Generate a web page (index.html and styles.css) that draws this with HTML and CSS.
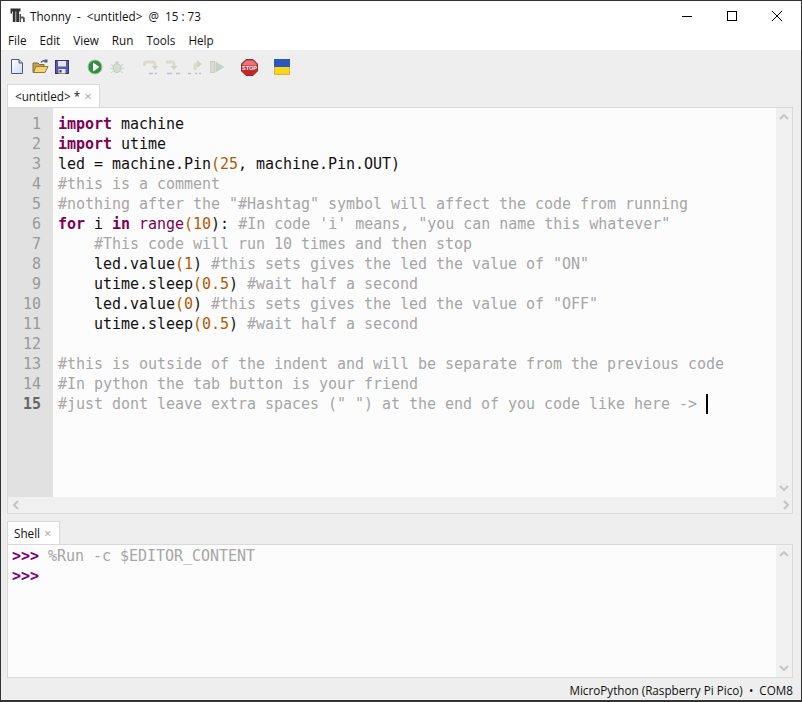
FILE: index.html
```html
<!DOCTYPE html>
<html lang="en">
<head>
    <meta charset="UTF-8">
    <meta name="viewport" content="width=device-width, initial-scale=1.0">
    <title>Thonny</title>
    <link rel="stylesheet" href="styles.css">
</head>
<body>
    <div class="window">
        <header class="titlebar">
            <svg class="app-icon" width="15" height="15" viewBox="0 0 15 15">
                <path d="M0.500 0.500H10.500V3.500H9V14H6.200V3.500H5.500V14H2.800V3.500H2V5.500H0.500Z" fill="#333"/>
                <path d="M9.500 6H11V8.500H13C14 8.500 14.800 9.300 14.800 10.500V14H13V10.500H11V14H9.500Z" fill="#555"/>
            </svg>
            <span class="title-text">Thonny  -  &lt;untitled&gt;  @  15 : 73</span>
            <div class="window-buttons">
                <svg width="12" height="12" viewBox="0 0 12 12"><path d="M1 6.500H11" stroke="#000"/></svg>
                <svg width="12" height="12" viewBox="0 0 12 12"><rect x="1.500" y="1.500" width="9" height="9" fill="none" stroke="#000"/></svg>
                <svg width="12" height="12" viewBox="0 0 12 12"><path d="M1 1L11 11M11 1L1 11" stroke="#000"/></svg>
            </div>
        </header>

        <nav class="menubar">
            <span>File</span><span>Edit</span><span>View</span><span>Run</span><span>Tools</span><span>Help</span>
        </nav>

        <section class="toolbar">
            <svg class="tool" width="16" height="16" viewBox="0 0 16 16">
                <defs>
                    <linearGradient id="page" x1="0" y1="0" x2="1" y2="1">
                        <stop offset="0" stop-color="#ffffff"/>
                        <stop offset="1" stop-color="#cdd8f0"/>
                    </linearGradient>
                </defs>
                <path d="M2.500 0.500H10L13.500 4V14.500H2.500Z" fill="url(#page)" stroke="#4f5a70"/>
                <path d="M10 0.500V4H13.500" fill="#b9c6e0" stroke="#4f5a70"/>
            </svg>
            <svg class="tool tool-open" width="17" height="16" viewBox="0 0 17 16">
                <path d="M1 4H6L7.500 5.500H12V13.500H1Z" fill="#c9a24a" stroke="#7d6a3c"/>
                <path d="M1.500 13.500L4 7.500H16L13 13.500Z" fill="#f6d36f" stroke="#8f7a45"/>
                <path d="M9 3.500C10 1.500 12 1.500 13.500 2.500" fill="none" stroke="#4a5f85" stroke-width="1.500"/>
                <path d="M12.500 0.500H15.500V3.500H12.500Z" fill="#4a5f85"/>
            </svg>
            <svg class="tool tool-save" width="16" height="16" viewBox="0 0 16 16">
                <rect x="1.500" y="1.500" width="13" height="13" fill="#5a55b0" stroke="#37346f"/>
                <rect x="4" y="2" width="8" height="5.500" fill="#e4e4f2"/>
                <rect x="4.500" y="10" width="7" height="4.500" fill="#e8e8e8"/>
                <rect x="5.500" y="11" width="2" height="2.500" fill="#333"/>
            </svg>
            <svg class="tool tool-run" width="16" height="16" viewBox="0 0 16 16">
                <circle cx="8" cy="8" r="7" fill="#2f8f3f" stroke="#9cc7a2"/>
                <path d="M6 3.500L12.500 8L6 12.500Z" fill="#fff"/>
            </svg>
            <svg class="tool tool-debug" width="16" height="16" viewBox="0 0 16 16">
                <ellipse cx="8" cy="9" rx="4" ry="4.500" fill="#d5ddd5" stroke="#c3c8bf"/>
                <circle cx="8" cy="4" r="2" fill="#cfd3c9"/>
                <path d="M1.500 5L4.500 7M14.500 5L11.500 7M1 9.500H4M15 9.500H12M2 14L4.500 12M14 14L11.500 12" stroke="#cfd3c9"/>
            </svg>
            <svg class="tool tool-step" width="16" height="16" viewBox="0 0 16 16">
                <path d="M1.500 7V4.500C1.500 3.500 2.500 3 3.500 3H9.500C11.500 3 12 4.500 12 7" fill="none" stroke="#dcdad0" stroke-width="3"/>
                <path d="M8.500 7H15.500L12 11Z" fill="#d3d2c6"/>
                <path d="M6 14.500H10M12 14.500H14" stroke="#b9bfc9" stroke-width="1.500"/>
            </svg>
            <svg class="tool" width="16" height="16" viewBox="0 0 16 16">
                <path d="M1 3H7C8.500 3 9 4.500 9 7" fill="none" stroke="#dcdad0" stroke-width="3"/>
                <path d="M5.500 7H12.500L9 11Z" fill="#d3d2c6"/>
                <path d="M2 14.500H7M11 14.500H15" stroke="#b9bfc9" stroke-width="1.500"/>
            </svg>
            <svg class="tool" width="16" height="16" viewBox="0 0 16 16">
                <path d="M8 11V7C8 5.500 8.500 5 10 5" fill="none" stroke="#dcdad0" stroke-width="3"/>
                <path d="M10 1L15 5L10 9Z" fill="#d3d2c6"/>
                <path d="M1 14.500H4M8 14.500H10M12 14.500H14" stroke="#b9bfc9" stroke-width="1.500"/>
            </svg>
            <svg class="tool" width="16" height="16" viewBox="0 0 16 16">
                <rect x="1.500" y="2.500" width="4" height="11" fill="#dddbcf" stroke="#cfcdc0"/>
                <path d="M6.500 2.500L15.500 8L6.500 13.500Z" fill="#c3d1c6"/>
            </svg>
            <svg class="tool tool-stop" width="17" height="17" viewBox="0 0 17 17">
                <path d="M5 0.500H12L16.500 5V12L12 16.500H5L0.500 12V5Z" fill="#c8242b" stroke="#8f2a2a"/>
                <path d="M5.300 1.500H11.700L15.500 5.300V6.500H1.500V5.300Z" fill="#e2777a"/>
                <text class="stop-label" x="8.500" y="10.800" text-anchor="middle">STOP</text>
            </svg>
            <svg class="tool tool-flag" width="16" height="16" viewBox="0 0 16 16">
                <rect width="16" height="8" fill="#2c56b8"/>
                <rect y="8" width="16" height="8" fill="#f7d51d"/>
                <path d="M0.500 8V15.500H15.500V8" fill="none" stroke="#dcb13a"/>
            </svg>
        </section>

        <section class="notebook editor-book">
            <div class="tabs">
                <div class="tab tab-editor">&lt;untitled&gt; * <span class="tab-close">×</span></div>
            </div>
            <div class="pane editor-pane">
                <div class="pane-row">
                    <div class="gutter">
                        <div>1</div><div>2</div><div>3</div><div>4</div><div>5</div>
                        <div>6</div><div>7</div><div>8</div><div>9</div><div>10</div>
                        <div>11</div><div>12</div><div>13</div><div>14</div><div class="current">15</div>
                    </div>
                    <pre class="code"><span class="kw">import</span> machine
<span class="kw">import</span> utime
led = machine.Pin<span class="br">(</span><span class="num">25</span>, machine.Pin.OUT)
<span class="cm">#this is a comment</span>
<span class="cm">#nothing after the "#Hashtag" symbol will affect the code from running</span>
<span class="kw">for</span> i <span class="kw">in</span> <span class="bi">range</span><span class="br">(</span><span class="num">10</span>): <span class="cm">#In code 'i' means, "you can name this whatever"</span>
    <span class="cm">#This code will run 10 times and then stop</span>
    led.value<span class="br">(</span><span class="num">1</span>) <span class="cm">#this sets gives the led the value of "ON"</span>
    utime.sleep<span class="br">(</span><span class="num">0.5</span>) <span class="cm">#wait half a second</span>
    led.value<span class="br">(</span><span class="num">0</span>) <span class="cm">#this sets gives the led the value of "OFF"</span>
    utime.sleep<span class="br">(</span><span class="num">0.5</span>) <span class="cm">#wait half a second</span>

<span class="cm">#this is outside of the indent and will be separate from the previous code</span>
<span class="cm">#In python the tab button is your friend</span>
<span class="cm">#just dont leave extra spaces (" ") at the end of you code like here -&gt; </span><span class="caret"></span></pre>
                    <div class="vscroll">
                        <svg width="10" height="6" viewBox="0 0 10 6"><path d="M1 5L5 1L9 5" fill="none" stroke="#c4c4c4" stroke-width="2"/></svg>
                        <svg width="10" height="6" viewBox="0 0 10 6"><path d="M1 1L5 5L9 1" fill="none" stroke="#c4c4c4" stroke-width="2"/></svg>
                    </div>
                </div>
                <div class="hscroll">
                    <svg width="6" height="10" viewBox="0 0 6 10"><path d="M5 1L1 5L5 9" fill="none" stroke="#c4c4c4" stroke-width="2"/></svg>
                    <svg width="6" height="10" viewBox="0 0 6 10"><path d="M1 1L5 5L1 9" fill="none" stroke="#c4c4c4" stroke-width="2"/></svg>
                </div>
            </div>
        </section>

        <section class="notebook shell-book">
            <div class="tabs">
                <div class="tab tab-shell">Shell <span class="tab-close">×</span></div>
            </div>
            <div class="pane shell-pane">
                <div class="pane-row">
                    <pre class="code shell-code"><span class="prompt">&gt;&gt;&gt;</span> <span class="cm">%Run -c $EDITOR_CONTENT</span>
<span class="prompt">&gt;&gt;&gt;</span></pre>
                    <div class="vscroll">
                        <svg width="10" height="6" viewBox="0 0 10 6"><path d="M1 5L5 1L9 5" fill="none" stroke="#c4c4c4" stroke-width="2"/></svg>
                        <svg width="10" height="6" viewBox="0 0 10 6"><path d="M1 1L5 5L9 1" fill="none" stroke="#c4c4c4" stroke-width="2"/></svg>
                    </div>
                </div>
            </div>
        </section>

        <footer class="statusbar">MicroPython (Raspberry Pi Pico)  •  COM8</footer>
    </div>
</body>
</html>
```

FILE: styles.css
```css
:root {
    --chrome: #eeeeee;
    --line: #d9d9d9;
    --paper: #fcfcfc;
    --comment: #a6a6a6;
}

* {
    margin: 0;
    padding: 0;
    box-sizing: border-box;
}

body {
    width: 802px;
    height: 702px;
    overflow: hidden;
    font-family: "Open Sans", "Noto Sans", sans-serif;
    font-size: 11.7px;
    color: #111;
}

.window {
    width: 802px;
    height: 702px;
    display: flex;
    flex-direction: column;
    background-color: var(--chrome);
    border: 1px solid #333;
    border-bottom-width: 2px;
}

.titlebar {
    height: 29px;
    flex: none;
    display: flex;
    align-items: center;
    background-color: #fff;
    padding-left: 9px;
}

.title-text {
    margin-left: 5px;
    white-space: pre;
}

.window-buttons {
    margin-left: auto;
    display: flex;
    gap: 33px;
    padding-right: 18px;
}

.menubar {
    height: 20px;
    flex: none;
    display: flex;
    gap: 13px;
    align-items: center;
    background-color: #fff;
    padding-left: 7px;
}

.toolbar {
    height: 34px;
    flex: none;
    display: flex;
    align-items: center;
    padding-left: 8px;
    gap: 6px;
}

.tool { flex: none; }
.tool-open { margin-left: 1px; }
.tool-save { margin-left: -1px; }
.tool-run { margin-left: 11px; }
.tool-step { margin-left: 12px; }
.tool-stop { margin-left: 10px; }
.tool-flag { margin-left: 10px; }

.stop-label {
    font-family: "Liberation Sans", sans-serif;
    font-size: 5.500px;
    font-weight: 700;
    fill: #fff;
}

.notebook {
    display: flex;
    flex-direction: column;
    padding: 0 8px 0 6px;
}

.editor-book { height: 430px; flex: none; }
.shell-book { margin-top: 7px; height: 157px; flex: none; }

.tabs {
    height: 23px;
    flex: none;
    display: flex;
}

.tab {
    background-color: #fff;
    border: 1px solid var(--line);
    border-bottom: none;
    padding: 2px 7px 0 7px;
    white-space: pre;
    line-height: 18px;
}

.tab-editor { width: 93px; }
.tab-shell { width: 53px; padding-left: 6px; }

.tab-close {
    color: #aaa;
    font-size: 13px;
    margin-left: 1px;
}

.pane {
    flex: 1;
    min-height: 0;
    display: flex;
    flex-direction: column;
    border: 1px solid var(--line);
    background-color: var(--paper);
}

.pane-row {
    flex: 1;
    min-height: 0;
    display: flex;
}

.gutter {
    width: 45px;
    flex: none;
    background-color: #e1e1e1;
    color: #999;
    padding-top: 6px;
    text-align: right;
    padding-right: 12px;
    font-family: "DejaVu Sans Mono", monospace;
    font-size: 15px;
    line-height: 20px;
}

.gutter .current {
    color: #666;
    font-weight: 700;
}

.code {
    flex: 1;
    min-width: 0;
    padding: 6px 0 0 5px;
    font-family: "DejaVu Sans Mono", monospace;
    font-size: 15px;
    line-height: 20px;
    letter-spacing: -0.03px;
    color: #111;
    overflow: hidden;
}

.shell-code {
    padding: 1px 0 0 4px;
}

.kw { color: #7f0055; font-weight: 700; }
.bi { color: #7f0055; }
.num { color: #b25a00; }
.br { color: #b25a00; }
.cm { color: var(--comment); }
.prompt { color: #7f0080; font-weight: 700; }

.caret {
    display: inline-block;
    width: 2px;
    height: 20px;
    background-color: #000;
    vertical-align: top;
}

.vscroll {
    width: 16px;
    flex: none;
    display: flex;
    flex-direction: column;
    justify-content: space-between;
    align-items: center;
    padding: 6px 0;
    background-color: #f0f0f0;
}

.hscroll {
    height: 16px;
    flex: none;
    display: flex;
    justify-content: space-between;
    align-items: center;
    padding: 0 3px 0 5px;
    background-color: #f0f0f0;
}

.statusbar {
    flex: 1;
    display: flex;
    align-items: center;
    justify-content: flex-end;
    padding: 1px 8px 0 0;
    white-space: pre;
}
```
